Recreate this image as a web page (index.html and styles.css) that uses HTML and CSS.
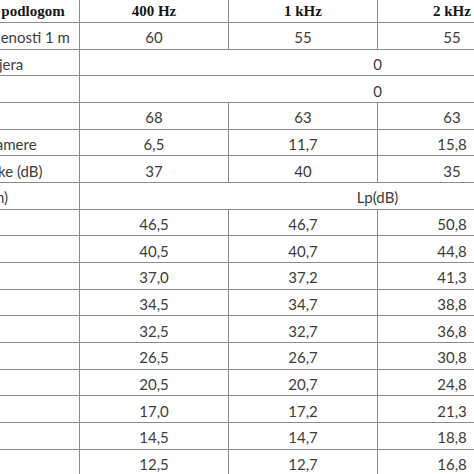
FILE: index.html
```html
<!DOCTYPE html>
<html lang="hr">
<head>
<meta charset="utf-8">
<title>Tablica</title>
<link rel="stylesheet" href="styles.css">
</head>
<body>
<div class="table">
  <div class="cell label head">Mjerenje razine buke s podlogom</div>
  <div class="cell head num">400 Hz</div>
  <div class="cell head num">1 kHz</div>
  <div class="cell head num">2 kHz</div>
  <div class="cell head num">4 kHz</div>

  <div class="cell label">Razina zvuka L na udaljenosti 1 m</div>
  <div class="cell num">60</div><div class="cell num">55</div><div class="cell num">55</div><div class="cell num">50</div>

  <div class="cell label">Korekcija radi uvjeta mjera</div>
  <div class="cell num span">0</div>

  <div class="cell label"></div>
  <div class="cell num span">0</div>

  <div class="cell label"></div>
  <div class="cell num">68</div><div class="cell num">63</div><div class="cell num">63</div><div class="cell num">58</div>

  <div class="cell label">Apsorpcijna svojstva kamere</div>
  <div class="cell num">6,5</div><div class="cell num">11,7</div><div class="cell num">15,8</div><div class="cell num">18,2</div>

  <div class="cell label">Razina ambientalne buke (dB)</div>
  <div class="cell num">37</div><div class="cell num">40</div><div class="cell num">35</div><div class="cell num">33</div>

  <div class="cell label">Udaljenost od izvora (m)</div>
  <div class="cell num span">Lp(dB)</div>

  <div class="cell label">1</div>
  <div class="cell num">46,5</div><div class="cell num">46,7</div><div class="cell num">50,8</div><div class="cell num">52,1</div>
  <div class="cell label">2</div>
  <div class="cell num">40,5</div><div class="cell num">40,7</div><div class="cell num">44,8</div><div class="cell num">46,1</div>
  <div class="cell label">3</div>
  <div class="cell num">37,0</div><div class="cell num">37,2</div><div class="cell num">41,3</div><div class="cell num">42,6</div>
  <div class="cell label">4</div>
  <div class="cell num">34,5</div><div class="cell num">34,7</div><div class="cell num">38,8</div><div class="cell num">40,1</div>
  <div class="cell label">5</div>
  <div class="cell num">32,5</div><div class="cell num">32,7</div><div class="cell num">36,8</div><div class="cell num">38,1</div>
  <div class="cell label">10</div>
  <div class="cell num">26,5</div><div class="cell num">26,7</div><div class="cell num">30,8</div><div class="cell num">32,1</div>
  <div class="cell label">20</div>
  <div class="cell num">20,5</div><div class="cell num">20,7</div><div class="cell num">24,8</div><div class="cell num">26,1</div>
  <div class="cell label">30</div>
  <div class="cell num">17,0</div><div class="cell num">17,2</div><div class="cell num">21,3</div><div class="cell num">22,6</div>
  <div class="cell label">40</div>
  <div class="cell num">14,5</div><div class="cell num">14,7</div><div class="cell num">18,8</div><div class="cell num">20,1</div>
  <div class="cell label">50</div>
  <div class="cell num">12,5</div><div class="cell num">12,7</div><div class="cell num">16,8</div><div class="cell num">18,1</div>
</div>
</body>
</html>
```
FILE: styles.css
```css
html, body {
  margin: 0;
  padding: 0;
  background: #ffffff;
  overflow: hidden;
}

.table {
  display: grid;
  grid-template-columns: 238px repeat(4, 149px);
  grid-auto-rows: 26.667px;
  margin: -3.667px 0 0 -158px;
  width: max-content;
  font-family: "Lato", "Open Sans", sans-serif;
  font-size: 15px;
  color: #3c3c3c;
}

.cell {
  box-sizing: border-box;
  border-right: 1px solid #8c8c8c;
  border-bottom: 1px solid #8c8c8c;
  display: flex;
  align-items: center;
  white-space: nowrap;
  overflow: hidden;
  padding-top: 3px;
}

.label {
  padding-left: 8px;
}

.num {
  justify-content: center;
}

.span {
  grid-column: span 4;
}

.head {
  font-family: "Liberation Serif", "DejaVu Serif", serif;
  font-weight: bold;
  font-size: 15px;
  color: #161616;
  padding-top: 5px;
}
```
